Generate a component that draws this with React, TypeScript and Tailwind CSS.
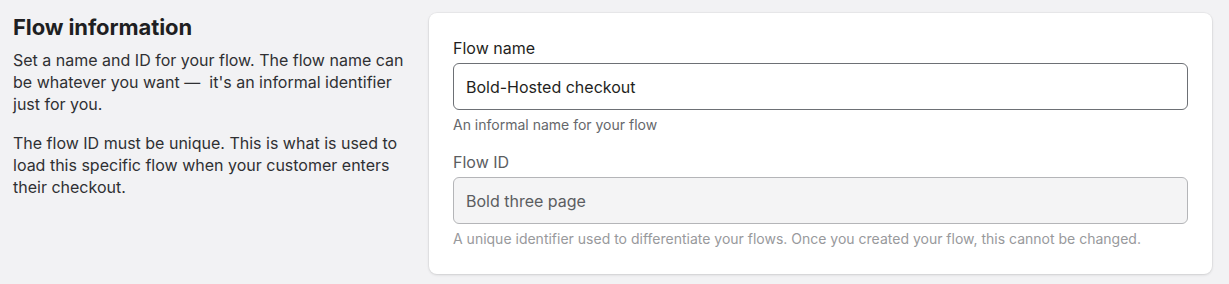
export default function App() {
  return (
    <div className="min-h-[284px] w-full bg-[#f2f2f4] flex items-start pl-[13px] pr-[17px] pt-[13px]" style={{ fontFamily: "Inter, 'Noto Sans', sans-serif" }}>
      <div className="w-[393px] shrink-0">
        <h2 className="text-[22px] leading-[28px] font-bold tracking-[-0.1px] text-[#1f1f22]">Flow information</h2>
        <p className="mt-[8px] text-[16px] leading-[22px] text-[#2f3033]">
          Set a name and ID for your flow. The flow name can be whatever you want —&nbsp; it's an informal identifier just for you.
        </p>
        <p className="mt-[17px] text-[16px] leading-[22px] text-[#2f3033]">
          The flow ID must be unique. This is what is used to load this specific flow when your customer enters their checkout.
        </p>
      </div>
      <div className="ml-[23px] flex-1 bg-white rounded-[8px] shadow-[0_1px_3px_rgba(0,0,0,0.12),0_0_0_1px_rgba(0,0,0,0.03)] px-[24px] pt-[25px] pb-[26px]">
        <div className="text-[16px] leading-[20px] text-[#1f1f22]">Flow name</div>
        <div className="mt-[5px] h-[47px] rounded-[6px] border border-[#6d7075] bg-white flex items-center px-[12px] text-[16px] text-[#1f1f22]">Bold-Hosted checkout</div>
        <div className="mt-[5px] text-[14px] leading-[19px] text-[#65676b]">An informal name for your flow</div>
        <div className="mt-[18px] text-[16px] leading-[20px] text-[#5b5d61]">Flow ID</div>
        <div className="mt-[5px] h-[47px] rounded-[6px] border border-[#b4b5b8] bg-[#f4f4f5] flex items-center px-[12px] text-[16px] text-[#5b5d61]">Bold three page</div>
        <div className="mt-[5px] text-[14px] leading-[19px] text-[#98999c]">A unique identifier used to differentiate your flows. Once you created your flow, this cannot be changed.</div>
      </div>
    </div>
  );
}
